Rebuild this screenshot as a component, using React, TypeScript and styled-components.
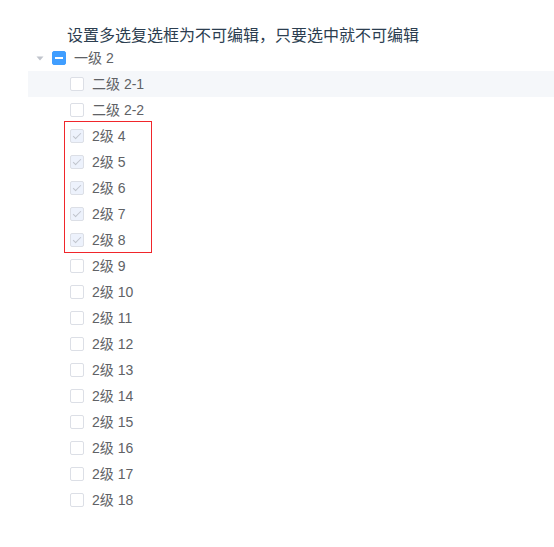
import React from 'react';
import styled, { createGlobalStyle } from 'styled-components';

const GlobalStyle = createGlobalStyle`
  html, body {
    margin: 0;
    padding: 0;
    background: #fff;
  }
  body {
    font-family: "Liberation Sans", "Noto Sans CJK SC", sans-serif;
  }
`;

const Page = styled.div`
  padding: 27px 0 0 28px;
`;

const Title = styled.div`
  padding-left: 39px;
  font-size: 16px;
  line-height: 18px;
  color: #2c3e50;
`;

const Tree = styled.div`
  position: relative;
  font-size: 14px;
  color: #606266;
`;

const Row = styled.div<{ level: number; hover?: boolean }>`
  display: flex;
  align-items: center;
  height: 26px;
  padding-left: ${(p) => (p.level - 1) * 18}px;
  background: ${(p) => (p.hover ? '#f5f7fa' : 'transparent')};
`;

const Expand = styled.span`
  width: 24px;
  height: 26px;
  display: flex;
  align-items: center;
  justify-content: center;
  flex-shrink: 0;
`;

const Box = styled.span<{ kind: 'empty' | 'half' | 'locked' }>`
  position: relative;
  box-sizing: border-box;
  width: 14px;
  height: 14px;
  border-radius: 2px;
  margin-right: 8px;
  flex-shrink: 0;
  border: 1px solid ${(p) => (p.kind === 'half' ? '#409eff' : '#dcdfe6')};
  background: ${(p) =>
    p.kind === 'half' ? '#409eff' : p.kind === 'locked' ? '#edf2fc' : '#fff'};
`;

const HalfBar = styled.span`
  position: absolute;
  left: 2px;
  right: 2px;
  top: 5px;
  height: 2px;
  background: #fff;
`;

const Tick = styled.span`
  position: absolute;
  left: 4px;
  top: 1px;
  width: 3px;
  height: 7px;
  border: 1px solid #c0c4cc;
  border-left: 0;
  border-top: 0;
  transform: rotate(45deg);
  box-sizing: content-box;
`;

const Label = styled.span`
  line-height: 26px;
  white-space: nowrap;
`;

const Marker = styled.div`
  position: absolute;
  left: 36px;
  top: 76px;
  width: 86px;
  height: 130px;
  border: 1px solid #f0262b;
  pointer-events: none;
`;

type Node = { label: string; state: 'empty' | 'locked'; hover?: boolean };

const children: Node[] = [
  { label: '二级 2-1', state: 'empty', hover: true },
  { label: '二级 2-2', state: 'empty' },
  ...[4, 5, 6, 7, 8].map((n) => ({ label: `2级 ${n}`, state: 'locked' as const })),
  ...[9, 10, 11, 12, 13, 14, 15, 16, 17, 18].map((n) => ({
    label: `2级 ${n}`,
    state: 'empty' as const,
  })),
];

const Caret = () => (
  <svg width="8" height="5" viewBox="0 0 8 5">
    <polygon points="0.5,0.5 7.5,0.5 4,4.5" fill="#c0c4cc" />
  </svg>
);

export default function App() {
  return (
    <>
      <GlobalStyle />
      <Page>
        <Title>设置多选复选框为不可编辑，只要选中就不可编辑</Title>
        <Tree>
          <Row level={1}>
            <Expand>
              <Caret />
            </Expand>
            <Box kind="half">
              <HalfBar />
            </Box>
            <Label>一级 2</Label>
          </Row>
          {children.map((c) => (
            <Row key={c.label} level={2} hover={c.hover}>
              <Expand />
              <Box kind={c.state}>{c.state === 'locked' && <Tick />}</Box>
              <Label>{c.label}</Label>
            </Row>
          ))}
          <Marker />
        </Tree>
      </Page>
    </>
  );
}
